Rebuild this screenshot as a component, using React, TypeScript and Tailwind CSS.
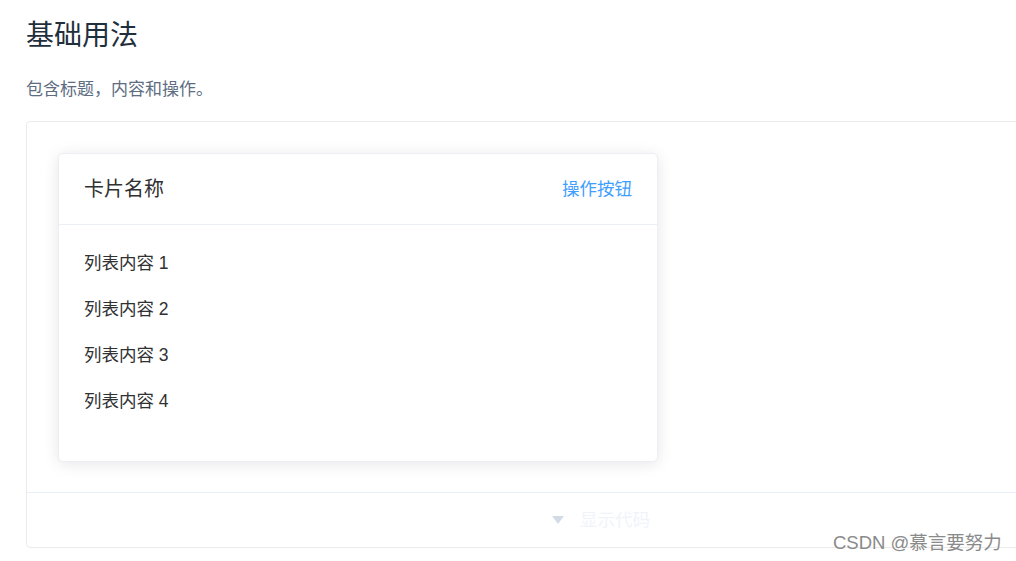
const items = ['列表内容 1', '列表内容 2', '列表内容 3', '列表内容 4']

export default function App() {
  return (
    <div
      className="relative h-[561px] w-[1016px] overflow-hidden bg-white"
      style={{ fontFamily: '"Liberation Sans", "Noto Sans CJK SC", sans-serif' }}
    >
      <div className="pl-[26px] pt-[17px]">
        <h3 className="text-[28px] leading-[38px] font-normal text-[#1f2f3d]">基础用法</h3>
        <p className="mt-[23px] text-[17px] leading-[24px] text-[#5e6d82]">包含标题，内容和操作。</p>

        <div className="mt-[19px] w-[1040px] rounded-[4px] border border-[#ebebeb]">
          <div className="px-[31px] pt-[31px] pb-[30px]">
            <div className="w-[600px] rounded-[5px] border border-[#ebeef5] bg-white text-[#303133] shadow-[0_2px_15px_0_rgba(0,0,0,0.1)]">
              <div className="flex items-center justify-between border-b border-[#ebeef5] px-[25px] py-[22px]">
                <span className="text-[20px] leading-[26px]">卡片名称</span>
                <button className="text-[17.5px] leading-[26px] text-[#409eff]">操作按钮</button>
              </div>
              <div className="px-[25px] pt-[27px] pb-[25px]">
                {items.map((item) => (
                  <div key={item} className="mb-[23px] text-[17.5px] leading-[23px]">
                    {item}
                  </div>
                ))}
              </div>
            </div>
          </div>
          <div className="flex h-[55px] items-center border-t border-[#eaeefb] pl-[525px]">
            <svg width="12" height="8" viewBox="0 0 12 8" className="mr-[16px]" aria-hidden="true">
              <path d="M0 0 L12 0 L6 8 Z" fill="#d3dce6" />
            </svg>
            <span className="text-[17.5px] text-[#f0f4fa]">显示代码</span>
          </div>
        </div>
      </div>

      <div
        className="absolute top-[530px] left-[833px] text-[18.5px] leading-[26px] text-[#8a8a8a]"
        style={{ textShadow: '0 0 1px #fff' }}
      >
        CSDN @慕言要努力
      </div>
    </div>
  )
}
